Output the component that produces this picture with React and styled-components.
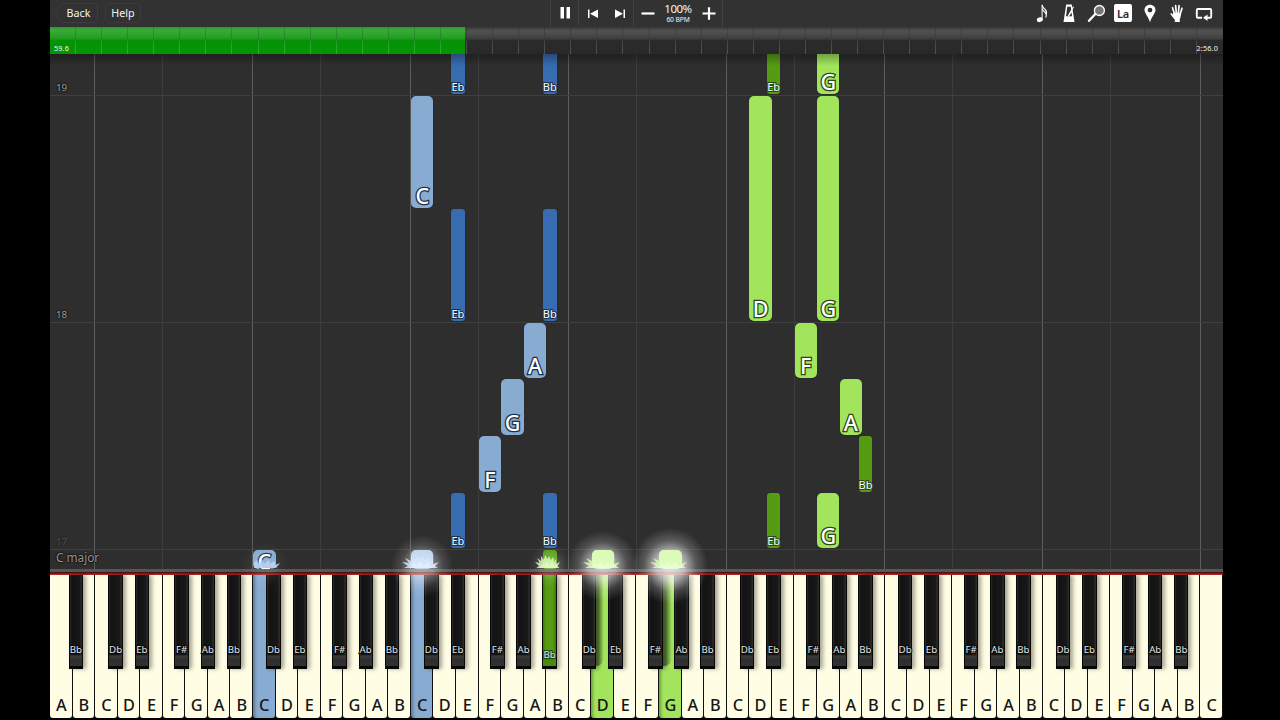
import styled, { createGlobalStyle, css } from 'styled-components';

export const colors = {
  bar: '#323232',
  roll: '#2e2e2e',
  ivory: '#fffde3',
  blue: '#88abd2',
  blueDark: '#386cb0',
  green: '#a2e55d',
  greenDark: '#559c12',
  white: '#f4f4f4',
};

const KEY_COUNT = 52;
const KEY_WIDTH = 1173 / KEY_COUNT;
const MEASURE = 227;
const LETTERS = 'ABCDEFG';

// black key that follows each white key, and its shift from the gap
const SHARPS = {
  A: { name: 'Bb', shift: 3.5 },
  C: { name: 'Db', shift: -2 },
  D: { name: 'Eb', shift: 1.8 },
  F: { name: 'F#', shift: -3.6 },
  G: { name: 'Ab', shift: 0 },
};

const notes = [
  { key: 17, sharp: true, start: 19, length: 0.5, hand: 'left' },
  { key: 21, sharp: true, start: 19, length: 0.5, hand: 'left' },
  { key: 31, sharp: true, start: 19, length: 0.5, hand: 'right' },
  { key: 34, start: 19, length: 0.5, hand: 'right' },
  { key: 16, start: 18.5, length: 0.5, hand: 'left' },
  { key: 31, start: 18, length: 1, hand: 'right' },
  { key: 34, start: 18, length: 1, hand: 'right' },
  { key: 17, sharp: true, start: 18, length: 0.5, hand: 'left' },
  { key: 21, sharp: true, start: 18, length: 0.5, hand: 'left' },
  { key: 21, start: 17.75, length: 0.25, hand: 'left' },
  { key: 33, start: 17.75, length: 0.25, hand: 'right' },
  { key: 20, start: 17.5, length: 0.25, hand: 'left' },
  { key: 35, start: 17.5, length: 0.25, hand: 'right' },
  { key: 19, start: 17.25, length: 0.25, hand: 'left' },
  { key: 35, sharp: true, start: 17.25, length: 0.25, hand: 'right' },
  { key: 17, sharp: true, start: 17, length: 0.25, hand: 'left' },
  { key: 21, sharp: true, start: 17, length: 0.25, hand: 'left' },
  { key: 31, sharp: true, start: 17, length: 0.25, hand: 'right' },
  { key: 34, start: 17, length: 0.25, hand: 'right' },
  { key: 9, start: 16.5, length: 0.5, hand: 'left', lit: 0.15, label: true },
  { key: 16, start: 16.5, length: 0.5, hand: 'left', lit: 0.6 },
  { key: 21, sharp: true, start: 16.5, length: 0.5, hand: 'right', lit: 0.3 },
  { key: 24, start: 16.5, length: 0.5, hand: 'right', lit: 0.85 },
  { key: 27, start: 16.5, length: 0.5, hand: 'right', lit: 1 },
];

const pressed = notes.filter((note) => note.lit);

function letterOf(key) {
  return LETTERS[key % 7];
}

function noteLeft(note) {
  if (!note.sharp) return note.key * KEY_WIDTH + 0.2;
  return (note.key + 1) * KEY_WIDTH + SHARPS[letterOf(note.key)].shift - 6.8;
}

function noteCenter(note) {
  return noteLeft(note) + (note.sharp ? 6.8 : 11);
}

function noteColor(note) {
  if (note.hand === 'left') return note.sharp ? colors.blueDark : colors.blue;
  return note.sharp ? colors.greenDark : colors.green;
}

const GlobalStyle = createGlobalStyle`
  * {
    box-sizing: border-box;
  }

  body {
    margin: 0;
    background: #000;
    font-family: 'Noto Sans', 'Open Sans', sans-serif;
    overflow: hidden;
  }
`;

const outline = css`
  -webkit-text-stroke: ${(p) => p.$stroke || 2}px ${(p) => p.$edge};
  paint-order: stroke fill;
`;

const App = styled.main`
  display: flex;
  flex-direction: column;
  width: 1173px;
  height: 720px;
  margin-left: 50px;
  overflow: hidden;
`;

//toolbar---------------

const Toolbar = styled.header`
  flex: none;
  display: grid;
  grid-template-columns: 1fr auto 1fr;
  align-items: center;
  height: 27px;
  padding-bottom: 1px;
  background: ${colors.bar};
  color: ${colors.white};
`;

const Menu = styled.nav`
  display: flex;
  gap: 7px;
  padding-left: 4px;
`;

const MenuButton = styled.button`
  height: 20px;
  width: 36px;
  padding: 0;
  border: 1px solid #3b3b3b;
  border-radius: 4px;
  background: none;
  color: ${colors.white};
  font: 10.7px 'Noto Sans', sans-serif;
`;

const BackButton = styled.button`
  position: relative;
  width: 44px;
  height: 20px;
  padding: 0 0 0 5px;
  border: none;
  background: none;
  color: ${colors.white};
  font: 10.7px 'Noto Sans', sans-serif;

  svg {
    position: absolute;
    top: 0;
    left: 0;
  }
`;

const Transport = styled.div`
  display: flex;
  align-items: center;
  height: 26px;
  width: 173px;
  border-left: 1px solid #404040;
  border-right: 1px solid #404040;
`;

const Group = styled.div`
  display: flex;
  align-items: center;
  justify-content: ${(p) => p.$spread || 'center'};
  width: ${(p) => p.$width}px;
  padding: ${(p) => p.$pad || 0};
  height: 26px;
  border-right: ${(p) => (p.$last ? 'none' : '1px solid #404040')};
`;

const Tempo = styled.div`
  display: flex;
  flex-direction: column;
  align-items: center;
  width: 30px;
  padding-top: 1px;
  font-size: 11.5px;
  line-height: 10px;
  letter-spacing: -0.5px;

  small {
    padding-top: 1px;
    font-size: 6.7px;
    line-height: 9px;
    letter-spacing: -0.1px;
    white-space: nowrap;
  }
`;

const Tools = styled.div`
  display: flex;
  justify-content: flex-end;
  gap: 7px;
  padding-right: 9px;

  svg {
    display: block;
  }
`;

const LabelToggle = styled.div`
  width: 20px;
  height: 20px;
  padding: 1px;

  span {
    display: block;
    height: 18px;
    border-radius: 2px;
    background: #fff;
    color: #2b2b2b;
    font-size: 11px;
    font-weight: 600;
    line-height: 20px;
    text-align: center;
    letter-spacing: -0.3px;
  }
`;

//song position---------------

const Timeline = styled.div`
  flex: none;
  position: relative;
  display: flex;
  justify-content: space-between;
  align-items: flex-end;
  height: 27px;
  padding: 0 5px 1px 4px;
  background: linear-gradient(#383838, #525252 15%, #404040 42%, #2b2b2b 50%, #292929);
  color: ${colors.white};
  font-size: 7.2px;
  line-height: 10px;
  letter-spacing: 0.2px;
`;

const Played = styled.div`
  position: absolute;
  top: 0;
  left: 0;
  width: 415px;
  height: 27px;
  background: linear-gradient(#2f9a2f, #38ab38 12%, #229c22 42%, #069306 50%, #049504);
`;

const Ticks = styled.div`
  position: absolute;
  inset: 0;
  display: grid;
  grid-template-columns: repeat(45, 1fr);

  i {
    border-right: 1px solid;
    border-image: linear-gradient(rgba(0, 0, 0, 0.15) 40%, rgba(255, 255, 255, 0.13) 55%, rgba(255, 255, 255, 0.2)) 1;
  }

  i:last-child {
    border: none;
  }
`;

const Time = styled.span`
  position: relative;
`;

//falling notes---------------

const Roll = styled.section`
  flex: none;
  position: relative;
  height: 515px;
  background: ${colors.roll};
  overflow: hidden;

  &::after {
    content: '';
    position: absolute;
    inset: 0 0 auto;
    height: 12px;
    background: linear-gradient(rgba(0, 0, 0, 0.3), transparent);
  }
`;

const Lanes = styled.div`
  display: grid;
  grid-template-columns: repeat(${KEY_COUNT}, 1fr);
  height: 100%;
  margin-left: -0.7px;
`;

const Lane = styled.div`
  border-left: ${(p) => p.$letter === 'C' && '1px solid #5c5c5c'};
  border-left: ${(p) => p.$letter === 'F' && '1px solid #3d3d3d'};
`;

const Measure = styled.div`
  position: absolute;
  left: 0;
  right: 0;
  border-top: 1px solid #3f3f3f;

  span {
    position: absolute;
    bottom: 2px;
    left: 6px;
    color: #a0a0a0;
    font-size: 9.8px;
    line-height: 12px;
    opacity: ${(p) => (p.$faded ? 0.25 : 1)};
    text-shadow: 0 0 2px #000, 0 0 2px #000;
  }
`;

const Signature = styled.div`
  position: absolute;
  left: 6px;
  bottom: 4px;
  color: #969696;
  font-size: 11.8px;
  line-height: 16px;
  text-shadow: 0 0 2px #000, 0 0 2px #000;
`;

const Note = styled.div`
  position: absolute;
  display: flex;
  align-items: flex-end;
  justify-content: center;
  width: ${(p) => (p.$sharp ? 13.6 : 22.3)}px;
  padding-bottom: ${(p) => (p.$sharp ? 1 : 0)}px;
  border-radius: ${(p) => (p.$sharp ? 3 : 5)}px;
  background: ${(p) => p.$color};
  box-shadow: 0 0 1px #1b2025;
  color: #fff;
  font-size: ${(p) => (p.$sharp ? 11 : 21.5)}px;
  font-weight: ${(p) => (p.$sharp ? 400 : 500)};
  line-height: ${(p) => (p.$sharp ? 13 : 24)}px;
  ${outline}
`;

// frame shared by the roll and the keyboard, so the glow can spill over both
const Stage = styled.div`
  position: relative;
`;

const Effects = styled.div`
  position: absolute;
  top: -54px;
  left: 0;
  z-index: 4;
`;

const Glow = styled.div`
  position: absolute;
  top: ${(p) => 566 - p.$size / 2}px;
  width: ${(p) => p.$size}px;
  height: ${(p) => p.$size}px;
  margin-left: ${(p) => -p.$size / 2}px;
  border-radius: 50%;
  background: radial-gradient(
    closest-side,
    rgba(255, 255, 255, ${(p) => p.$power}),
    rgba(255, 255, 255, ${(p) => p.$power * 0.75}) 38%,
    rgba(255, 255, 255, ${(p) => p.$power * 0.25}) 68%,
    transparent
  );
`;

const Splash = styled.svg`
  position: absolute;
  top: 548px;
  margin-left: -20px;
`;

//keyboard---------------

const Felt = styled.div`
  flex: none;
  height: 6px;
  background: linear-gradient(#575757 3px, #3a1616 3px, #571313 4px, #a92020 5px, #b52a24 6px);
`;

const Keyboard = styled.section`
  flex: none;
  display: grid;
  grid-template-columns: repeat(${KEY_COUNT}, 1fr);
  height: 142.5px;
  background: #111;
`;

const WhiteKey = styled.div`
  position: relative;
  display: flex;
  align-items: flex-end;
  justify-content: center;
  margin-right: 1px;
  padding: 0 0 2px 1px;
  border-radius: 0 0 3px 3px;
  background: ${(p) => p.$color || colors.ivory};
  box-shadow: ${(p) => p.$color && 'inset 4px 0 3px -2px rgba(0, 0, 0, 0.3)'};
  color: #161616;
  font-size: 16.3px;
  font-weight: 500;
  line-height: 21px;
`;

const KeyShade = styled.i`
  position: absolute;
  top: 0;
  left: 0;
  width: 13px;
  height: 91px;
  background: linear-gradient(90deg, rgba(0, 0, 0, 0.45) 55%, transparent);
  border-radius: 0 0 8px 0;
`;

const BlackKey = styled.div`
  position: absolute;
  top: 0;
  right: ${(p) => -8.1 - p.$shift}px;
  z-index: 2;
  display: flex;
  align-items: flex-end;
  justify-content: center;
  width: 14.4px;
  height: 94px;
  padding-bottom: ${(p) => (p.$color ? 5 : 10)}px;
  border: 1px solid #080808;
  border-width: 0 1px 3px;
  background: ${(p) =>
    p.$color
      ? `linear-gradient(transparent 83px, #2f6107 83px, #4a8a10 85px), linear-gradient(90deg, #3f7a0a, ${p.$color} 25%, ${p.$color} 75%, #3f7a0a)`
      : 'linear-gradient(transparent 80px, #2a2a2a 80px, #3c3c3c 82px, #2e2e2e 84px, #313131), linear-gradient(90deg, #2b2b2b, #121212 15%, #181818 80%, #303030)'};
  box-shadow: 3px 0 4px rgba(0, 0, 0, 0.35);
  color: #e2e2e2;
  font-size: 9.7px;
  font-weight: 400;
  line-height: 12px;
  ${outline}
`;

function Splashes({ note }) {
  const tint = note.hand === 'left' ? '#d3e6fb' : '#dcfbb8';
  if (note.label) {
    return (
      <Splash width="40" height="21" viewBox="0 0 40 21" style={{ left: noteCenter(note) }}>
        <path d="M10 20V15L13 12L15 16L18 11L20 16L25 12L26 16L31 13V17L36 15L32 20Z" fill="#b9d4f2" opacity=".9" />
      </Splash>
    );
  }
  const narrow = note.sharp ? 'translate(5 0) scale(.68 1)' : undefined;
  return (
    <Splash width="40" height="21" viewBox="0 0 40 21" style={{ left: noteCenter(note) }}>
      {!note.sharp && (
        <rect x="9" y="2" width="22.300" height="18" rx="5" fill={tint} opacity={note.lit} />
      )}
      <g transform={narrow}>
        <path
          d="M2 20L6 18L0 14L7 15L3 10L9 13L9 8L13 12L15 7L18 11L21 8L23 12L27 9L28 14L31 11L31 16L37 14L33 18L36 20Z"
          fill={tint}
          opacity=".85"
        />
        <path d="M7 20L12 15L14 17L18 13L21 17L26 14L28 18L34 16L32 20Z" fill="#fff" opacity=".35" />
      </g>
    </Splash>
  );
}

function PressedGlow({ note }) {
  const size = note.sharp ? 44 : 42 + note.lit * 34;
  return <Glow $size={size} $power={note.lit * 0.85} style={{ left: noteCenter(note) }} />;
}

function FallingNote({ note }) {
  const bottom = 495 - (note.start - 17) * MEASURE;
  const height = note.length * MEASURE - 1.4;
  const letter = letterOf(note.key);
  const name = note.sharp ? SHARPS[letter].name : letter;
  return (
    <Note
      $sharp={note.sharp}
      $color={noteColor(note)}
      $edge={note.hand === 'left' ? '#1d3048' : '#2c4719'}
      $stroke={note.sharp ? 2 : 2.6}
      style={{
        left: noteLeft(note),
        top: bottom - height - 0.7,
        height: note.lit ? 19 : height,
        lineHeight: note.label && '14px',
      }}
    >
      {(!note.lit || note.label) && name}
    </Note>
  );
}

function Key({ index }) {
  const letter = letterOf(index);
  const sharp = index < KEY_COUNT - 1 && SHARPS[letter];
  const white = pressed.find((note) => note.key === index && !note.sharp);
  const black = pressed.find((note) => note.key === index && note.sharp);
  return (
    <WhiteKey $color={white && noteColor(white)}>
      {white && letter !== 'C' && <KeyShade />}
      {letter}
      {sharp && (
        <BlackKey
          $shift={sharp.shift}
          $color={black && noteColor(black)}
          $edge={black ? '#23440a' : '#0b0b0b'}
        >
          {sharp.name}
        </BlackKey>
      )}
    </WhiteKey>
  );
}

function Icon({ width = 20, children }) {
  return (
    <svg width={width} height="20" viewBox={`0 0 ${width} 20`} fill="#fff">
      {children}
    </svg>
  );
}

export default function Layout() {
  const keys = Array.from({ length: KEY_COUNT }, (_, i) => i);
  return (
    <>
      <GlobalStyle />
      <App>
        <Toolbar>
          <Menu>
            <BackButton>
              <svg width="44" height="20" fill="none" stroke="#3d3d3d">
                <path d="M9 .5H40Q43.500 .5 43.500 4V16Q43.500 19.500 40 19.500H9Q7 19 1 10Q7 1 9 .5Z" />
              </svg>
              Back
            </BackButton>
            <MenuButton>Help</MenuButton>
          </Menu>
          <Transport>
            <Group $width={28}>
              <Icon width={12}>
                <path d="M1.500 4H5V15.500H1.500zM7.500 4H11V15.500H7.500z" />
              </Icon>
            </Group>
            <Group $width={55} $spread="space-between" $pad="0 7px 0 8px">
              <Icon width={12}>
                <path d="M1 6.500H2.500V15H1zM11 6.500V15L3 10.750z" />
              </Icon>
              <Icon width={12}>
                <path d="M9.500 6.500H11V15H9.500zM1 6.500V15L9 10.750z" />
              </Icon>
            </Group>
            <Group $width={88} $spread="space-between" $pad="0 6.500px 0 6.500px" $last>
              <Icon width={14}>
                <path d="M.5 9.400H13.500V11.600H.5z" />
              </Icon>
              <Tempo>
                100%
                <small>60 BPM</small>
              </Tempo>
              <Icon width={14}>
                <path d="M.5 9.400H13.500V11.600H.5zM5.900 4.200H8.100V16.700H5.900z" />
              </Icon>
            </Group>
          </Transport>
          <Tools>
            <Icon>
              <ellipse cx="7.800" cy="16.700" rx="3" ry="2.300" transform="rotate(-20 7.800 16.700)" />
              <path d="M9.600 1.800H10.600V16.800H9.600z" />
              <path
                d="M10.200 2Q10.700 5 13.200 6.500Q15.200 8.500 14.200 11.500M10.200 6Q11.200 8 13.200 9.500Q15.200 11.500 13.700 14.500"
                fill="none"
                stroke="#fff"
                strokeWidth="1.100"
              />
            </Icon>
            <Icon>
              <path
                fillRule="evenodd"
                d="M7.200 1.500H12.800L15.500 19H4.500zM8.300 3.700L7 13.300H13L12.500 9.300L10.500 12.800L9.500 12.300L12.200 7.200L11.700 3.700z"
              />
              <path d="M14.500 3.800L9.300 13" stroke="#fff" strokeWidth="1.200" />
            </Icon>
            <Icon>
              <path d="M9.300 11L3 17.800" stroke="#fff" strokeWidth="2.400" strokeLinecap="round" />
              <circle cx="13.400" cy="7.500" r="5" fill="#777" stroke="#fff" strokeWidth="1.300" />
            </Icon>
            <LabelToggle>
              <span>La</span>
            </LabelToggle>
            <Icon>
              <path
                fillRule="evenodd"
                d="M10 1.700C6.700 1.700 4.500 4.100 4.500 7.100C4.500 10.200 8 13.200 10 19.200C12 13.200 15.500 10.200 15.500 7.100C15.500 4.100 13.300 1.700 10 1.700zM10 4.700A2.400 2.400 0 1 1 10 9.500A2.400 2.400 0 1 1 10 4.700z"
              />
            </Icon>
            <Icon>
              <g fill="none" stroke="#fff" strokeWidth="1.700" strokeLinecap="round">
                <path d="M7.500 11L5.500 4.700M9.300 10L8.600 2.500M11.400 10L12 2.700M13.200 11L15 5.200M7.500 14.700L4.300 11" />
              </g>
              <path d="M6.600 9.700L13.900 9.900Q14.400 13.200 12.800 16.200V19H7.800V16.700L5.200 13.200z" />
            </Icon>
            <Icon>
              <path
                d="M8 14.800H4Q2.800 14.800 2.800 13.500V7.200Q2.800 6 4 6H16Q17.200 6 17.200 7.200V13.500Q17.200 14.800 16 14.800H13"
                fill="none"
                stroke="#fff"
                strokeWidth="1.900"
              />
              <path d="M9 14.800L13.500 11.600V18z" />
            </Icon>
          </Tools>
        </Toolbar>
        <Timeline>
          <Played />
          <Ticks>
            {Array.from({ length: 45 }, (_, i) => (
              <i key={i} />
            ))}
          </Ticks>
          <Time>59.6</Time>
          <Time>2:56.0</Time>
        </Timeline>
        <Stage>
          <Roll>
            <Lanes>
              {keys.map((key) => (
                <Lane key={key} $letter={letterOf(key)} />
              ))}
            </Lanes>
            {[19, 18, 17].map((n) => (
              <Measure key={n} $faded={n === 17} style={{ top: 495 - (n - 17) * MEASURE }}>
                <span>{n}</span>
              </Measure>
            ))}
            <Signature>C major</Signature>
            {notes.map((note, i) => (
              <FallingNote key={i} note={note} />
            ))}
          </Roll>
          <Felt />
          <Keyboard>
            {keys.map((key) => (
              <Key key={key} index={key} />
            ))}
          </Keyboard>
          <Effects>
            {pressed.map((note) => (
              <PressedGlow key={note.key} note={note} />
            ))}
            {pressed.map((note) => (
              <Splashes key={note.key} note={note} />
            ))}
          </Effects>
        </Stage>
      </App>
    </>
  );
}
